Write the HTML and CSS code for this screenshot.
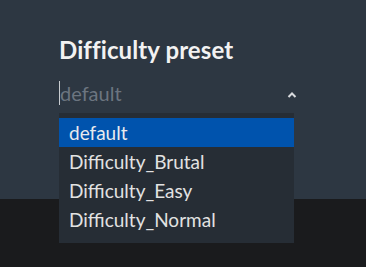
FILE: index.html
```html
<!DOCTYPE html>
<html>
<head>
<meta charset="utf-8">
<link rel="stylesheet" href="styles.css">
</head>
<body>
<div class="panel">
  <h2 class="title">Difficulty preset</h2>
  <div class="field">
    <div class="input"><span class="caret"></span><span class="placeholder">default</span></div>
    <svg class="chev" width="10" height="6" viewBox="0 0 10 6"><path d="M1.5 5 L5 1.5 L8.5 5" fill="none" stroke="#d8dadd" stroke-width="2"/></svg>
    <ul class="menu">
      <li class="opt sel">default</li>
      <li class="opt">Difficulty_Brutal</li>
      <li class="opt">Difficulty_Easy</li>
      <li class="opt">Difficulty_Normal</li>
    </ul>
  </div>
</div>
</body>
</html>
```
FILE: styles.css
```css
html, body { margin: 0; padding: 0; }
body {
  background: #1a1b1d;
  font-family: Lato, "Noto Sans", sans-serif;
  width: 366px;
  height: 267px;
  overflow: hidden;
}
.panel {
  background: #2d3742;
  height: 199px;
  box-sizing: border-box;
  padding: 35px 0 0 59px;
}
.title {
  margin: 0;
  font-size: 24px;
  font-weight: 700;
  color: #f2f2f2;
  line-height: 30px;
  letter-spacing: 0.1px;
}
.field {
  position: relative;
  width: 241px;
  margin-top: 16px;
}
.input {
  display: flex;
  align-items: center;
  height: 24px;
}
.caret {
  width: 1px;
  height: 24px;
  background: #c8ccd0;
}
.placeholder {
  font-size: 20px;
  color: #6c7580;
  margin-left: 0;
}
.chev {
  position: absolute;
  right: 3px;
  top: 11px;
}
.menu {
  position: absolute;
  left: 0;
  top: 32px;
  width: 235px;
  margin: 0;
  padding: 5px 0 9px;
  list-style: none;
  background: #262d35;
}
.opt {
  height: 29px;
  line-height: 29px;
  padding-left: 10px;
  font-size: 19px;
  color: #e2e2e2;
}
.opt.sel {
  background: #0053ad;
  color: #e8eaee;
}
```
